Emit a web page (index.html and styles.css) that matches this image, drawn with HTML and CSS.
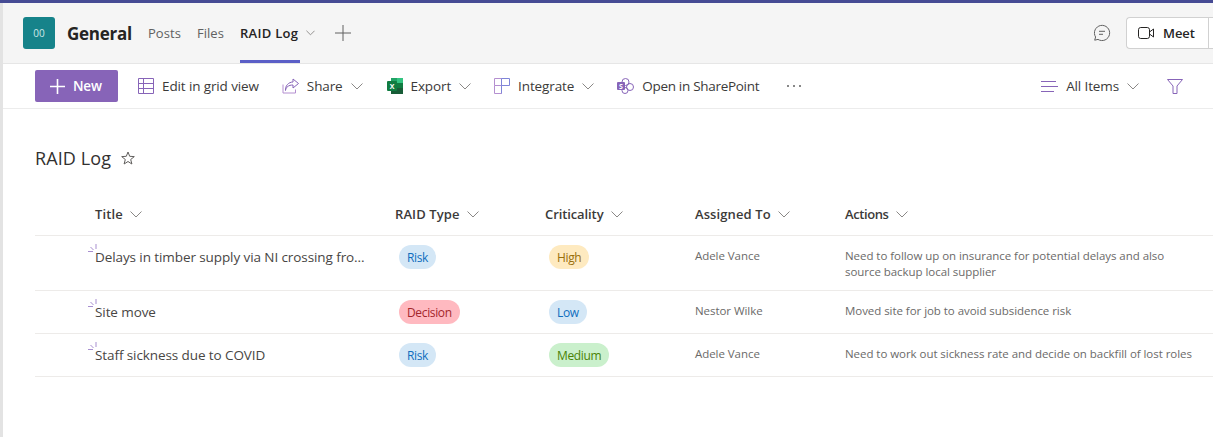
FILE: index.html
```html
<!DOCTYPE html>
<html lang="en">
<head>
<meta charset="utf-8">
<title>RAID Log</title>
<link rel="stylesheet" href="styles.css">
</head>
<body>
<div class="topline"></div>
<div class="shell">
  <header class="tabs">
    <div class="avatar">00</div>
    <h1 class="channel">General</h1>
    <a class="tab">Posts</a>
    <a class="tab">Files</a>
    <a class="tab active">RAID Log</a>
    <svg class="chev-s" viewBox="0 0 10 6"><path d="M.5.5 5 5 9.5.5"/></svg>
    <svg class="add" viewBox="0 0 16 16"><path d="M8 0v16M0 8h16"/></svg>
    <div class="spacer"></div>
    <svg class="chat" viewBox="0 0 18 18"><path d="M1.7 16.2 2.6 13A7.6 7.6 0 1 1 5 15.4z"/><path d="M6 7.3h6M6 10.3h4"/></svg>
    <div class="meet">
      <div class="meet-main">
        <svg viewBox="0 0 17 12"><rect x=".5" y=".5" width="11" height="11" rx="2.2"/><path d="M11.5 5 15.5 2v8l-4-3"/></svg>
        <span>Meet</span>
      </div>
    </div>
  </header>
  <nav class="commands">
    <button class="new"><svg viewBox="0 0 14 14"><path d="M7 0v14M0 7h14"/></svg>New</button>
    <a class="cmd cmd-grid">
      <svg class="ic" viewBox="0 0 16 16"><path class="p" d="M.5.5h15v15H.5zM.5 5.5h15M.5 10.5h15M5.5.5v15"/></svg>Edit in grid view</a>
    <a class="cmd cmd-share">
      <svg class="ic" viewBox="0 0 17 16"><path class="l" d="M1 6.500v8.500h12.500v-3.500"/><path class="p" d="M3.500 12.500c.5-3.500 3-5.500 7.500-5.500v3l5.500-4.500L11 1v3C6.500 4 3 8 3.500 12.500z"/></svg>Share<svg class="chev" viewBox="0 0 12 7"><path d="M.5.5 6 6 11.500.5"/></svg></a>
    <a class="cmd cmd-export">
      <svg class="ic" viewBox="0 0 16 16"><rect x="4" y="0" width="12" height="16" rx="1" fill="#107c41"/><rect x="10" y="0" width="6" height="5" fill="#33c481"/><rect x="4" y="0" width="6" height="5" fill="#21a366"/><rect x="10" y="10" width="6" height="6" fill="#185c37"/><rect x="4" y="10" width="6" height="6" fill="#185c37"/><rect x="0" y="3" width="10" height="10" rx="1" fill="#107c41"/><text class="ic-letter" x="5" y="11">X</text></svg>Export<svg class="chev" viewBox="0 0 12 7"><path d="M.5.5 6 6 11.500.5"/></svg></a>
    <a class="cmd cmd-int">
      <svg class="ic" viewBox="0 0 16 16"><path class="l" d="M.5.500h7v7h-7zM.5 7.500v8h7v-8"/><path class="b" d="M7.500.500h8v7h-8zM7.500 7.500v8"/></svg>Integrate<svg class="chev" viewBox="0 0 12 7"><path d="M.5.5 6 6 11.500.5"/></svg></a>
    <a class="cmd cmd-sp">
      <svg class="ic" viewBox="0 0 17 16"><circle class="p" cx="8.500" cy="4" r="3.500"/><circle class="p" cx="13" cy="9" r="3.500"/><circle class="p" cx="8" cy="12.500" r="3"/><rect x="0" y="4" width="8" height="8" rx="1" fill="#8764b8"/><text class="ic-letter" x="4" y="10.500">S</text></svg>Open in SharePoint</a>
    <a class="more"><i></i><i></i><i></i></a>
    <div class="spacer"></div>
    <a class="cmd cmd-view">
      <svg class="ic" viewBox="0 0 17 11"><path class="p" d="M0 .5h15M0 5.500h17M0 10.500h13"/></svg>All Items<svg class="chev" viewBox="0 0 12 7"><path d="M.5.5 6 6 11.500.5"/></svg></a>
    <svg class="filter" viewBox="0 0 16 15"><path class="p" d="M.5.500h15L10 7v7.500H6V7z"/></svg>
  </nav>
  <main class="list">
    <div class="list-title">
      <h2>RAID Log</h2>
      <svg class="star" viewBox="0 0 14 14"><path d="M7 1l1.700 4.300 4.600.3-3.600 2.900 1.200 4.500L7 10.500 3.100 13l1.200-4.500L.7 5.600l4.600-.3z"/></svg>
    </div>
    <div class="row head">
      <div class="c-title">Title<svg class="chev" viewBox="0 0 12 7"><path d="M.5.5 6 6 11.500.5"/></svg></div>
      <div class="c-type">RAID Type<svg class="chev" viewBox="0 0 12 7"><path d="M.5.5 6 6 11.500.5"/></svg></div>
      <div class="c-crit">Criticality<svg class="chev" viewBox="0 0 12 7"><path d="M.5.5 6 6 11.500.5"/></svg></div>
      <div class="c-who">Assigned To<svg class="chev" viewBox="0 0 12 7"><path d="M.5.5 6 6 11.500.5"/></svg></div>
      <div class="c-act">Actions<svg class="chev" viewBox="0 0 12 7"><path d="M.5.5 6 6 11.500.5"/></svg></div>
    </div>
    <div class="row item tall">
      <div class="c-title"><svg class="spark" viewBox="0 0 9 8"><path d="M0 7.500h5M2.500 3 5.500 6M8 0v5"/></svg>Delays in timber supply via NI crossing fro...</div>
      <div class="c-type"><span class="pill blue">Risk</span></div>
      <div class="c-crit"><span class="pill amber">High</span></div>
      <div class="c-who">Adele Vance</div>
      <div class="c-act">Need to follow up on insurance for potential delays and also source backup local supplier</div>
    </div>
    <div class="row item">
      <div class="c-title"><svg class="spark" viewBox="0 0 9 8"><path d="M0 7.500h5M2.500 3 5.500 6M8 0v5"/></svg>Site move</div>
      <div class="c-type"><span class="pill red">Decision</span></div>
      <div class="c-crit"><span class="pill blue">Low</span></div>
      <div class="c-who">Nestor Wilke</div>
      <div class="c-act">Moved site for job to avoid subsidence risk</div>
    </div>
    <div class="row item">
      <div class="c-title"><svg class="spark" viewBox="0 0 9 8"><path d="M0 7.500h5M2.500 3 5.500 6M8 0v5"/></svg>Staff sickness due to COVID</div>
      <div class="c-type"><span class="pill blue">Risk</span></div>
      <div class="c-crit"><span class="pill green">Medium</span></div>
      <div class="c-who">Adele Vance</div>
      <div class="c-act">Need to work out sickness rate and decide on backfill of lost roles</div>
    </div>
  </main>
</div>
</body>
</html>
```

FILE: styles.css
```css
* { box-sizing: border-box; }
html, body { margin: 0; height: 100%; overflow: hidden; }
body {
  font-family: "Open Sans", "Noto Sans", sans-serif;
  color: #323130;
  background: #fff;
}
svg { fill: none; display: block; flex: none; }
h1, h2 { margin: 0; }
.topline { height: 3px; background: #464b94; }
.shell {
  height: 434px;
  border-left: 3px solid #e3e3e3;
}
.spacer { flex: 1; }

.tabs {
  height: 61px;
  background: #f5f5f5;
  border-bottom: 1px solid #e6e6e6;
  display: flex;
  align-items: center;
  padding-left: 20px;
}
.avatar {
  width: 32px; height: 32px;
  border-radius: 3px;
  background: #16838a;
  color: #cfe8e8;
  font-size: 10px;
  display: flex; align-items: center; justify-content: center;
}
.channel {
  font-size: 17px;
  font-weight: 700;
  letter-spacing: -.25px;
  color: #252423;
  margin-left: 12px;
}
.tab {
  font-size: 13px;
  letter-spacing: .05px;
  color: #616161;
  height: 60px;
  display: flex; align-items: center;
  margin-left: 16px;
  border-bottom: 3px solid transparent;
  padding-top: 3px;
}
.tab.active {
  color: #252423;
  font-weight: 600;
  letter-spacing: .3px;
  border-bottom-color: #5b5fc7;
  width: 60px;
  white-space: nowrap;
}
.chev-s { width: 9px; height: 6px; margin-left: 6px; stroke: #8a8886; }
.add { width: 16px; height: 16px; margin-left: 20px; stroke: #616161; }
.chat { width: 18px; height: 18px; stroke: #616161; margin-right: 15px; }
.meet {
  width: 87px; height: 32px;
  background: #fff;
  border: 1px solid #d1d1d1;
  border-right: 0;
  border-radius: 4px 0 0 4px;
}
.meet-main {
  width: 82px; height: 100%;
  border-right: 1px solid #d1d1d1;
  display: flex; align-items: center;
  padding-left: 11px;
  gap: 8px;
  font-size: 13px;
  font-weight: 600;
  letter-spacing: -.1px;
  color: #252423;
}
.meet-main svg { width: 17px; height: 12px; stroke: #252423; }

.commands {
  height: 45px;
  border-bottom: 1px solid #ececec;
  display: flex;
  align-items: center;
  padding-left: 32px;
  font-size: 13.500px;
}
.new {
  width: 83px; height: 32px;
  border: 0;
  border-radius: 2px;
  background: #8764b8;
  color: #fff;
  font: 600 13.500px "Open Sans", sans-serif;
  letter-spacing: -.2px;
  display: flex; align-items: center;
  padding: 0 0 0 15px;
  gap: 8px;
}
.new svg { width: 15px; height: 15px; stroke: #fff; stroke-width: 1.500; }
.cmd {
  display: flex; align-items: center;
  color: #3b3a39;
  letter-spacing: -.12px;
  white-space: nowrap;
}
.ic { width: 16px; height: 16px; margin-right: 8px; }
.ic-letter { fill: #fff; font: 700 7px "Open Sans", sans-serif; text-anchor: middle; letter-spacing: 0; }
.p { stroke: #8764b8; }
.l { stroke: #b48fd0; }
.b { stroke: #7f85d8; }
.chev { width: 12px; height: 7px; stroke: #8a8886; margin-left: 8px; }
.cmd-grid { margin-left: 20px; }
.cmd-share { margin-left: 23px; }
.cmd-share .ic { width: 17px; }
.cmd-export { margin-left: 24px; }
.cmd-int { margin-left: 23px; }
.cmd-sp { margin-left: 23px; letter-spacing: -.3px; }
.cmd-sp .ic { width: 17px; }
.more { display: flex; gap: 4px; margin-left: 28px; }
.more i { width: 2px; height: 2px; border-radius: 50%; background: #616161; }
.cmd-view .ic { width: 17px; height: 11px; }
.filter { width: 16px; height: 15px; margin: 0 30px 0 28px; }

.list { padding-left: 32px; }
.list-title {
  display: flex; align-items: center;
  height: 30px;
  margin-top: 34px;
}
.list-title h2 { font-size: 18px; font-weight: 400; letter-spacing: .1px; color: #323130; }
.star { width: 14px; height: 14px; stroke: #605e5c; margin-left: 10px; }

.row {
  display: grid;
  grid-template-columns: 360px 150px 150px 150px 1fr;
  border-bottom: 1px solid #edebe9;
}
.head {
  height: 44px;
  margin-top: 19px;
  align-items: center;
  font-size: 13px;
  font-weight: 600;
  padding-top: 1px;
  color: #3b3a39;
}
.head > div { display: flex; align-items: center; letter-spacing: .1px; }
.head > .c-crit { letter-spacing: -.1px; }
.head > .c-act { letter-spacing: -.4px; }
.head .chev { margin-left: 7px; }
.c-title { padding-left: 60px; position: relative; }
.item { height: 43px; align-items: start; }
.item.tall { height: 55px; }
.item .c-title {
  font-size: 13.500px;
  letter-spacing: -.09px;
  padding-top: 12px;
  color: #484644;
  white-space: nowrap;
}
.spark { position: absolute; left: 53px; top: 8px; width: 9px; height: 8px; stroke: #a88fd0; }
.item .c-type, .item .c-crit { padding: 9px 0 0 4px; display: flex; }
.pill {
  display: flex; align-items: center;
  height: 24px;
  padding: 0 8px;
  border-radius: 12px;
  font-size: 12px;
  letter-spacing: -.35px;
}
.blue { background: #d4e7f6; color: #106ebe; }
.amber { background: #feeac0; color: #986f0b; }
.red { background: #ffb9c0; color: #a4262c; }
.green { background: #caf0cc; color: #498205; }
.item .c-who, .item .c-act {
  font-size: 11.500px;
  color: #6b6a69;
  letter-spacing: -.05px;
  padding-top: 12px;
  line-height: 16px;
}
.item .c-act { padding-right: 14px; }
```
